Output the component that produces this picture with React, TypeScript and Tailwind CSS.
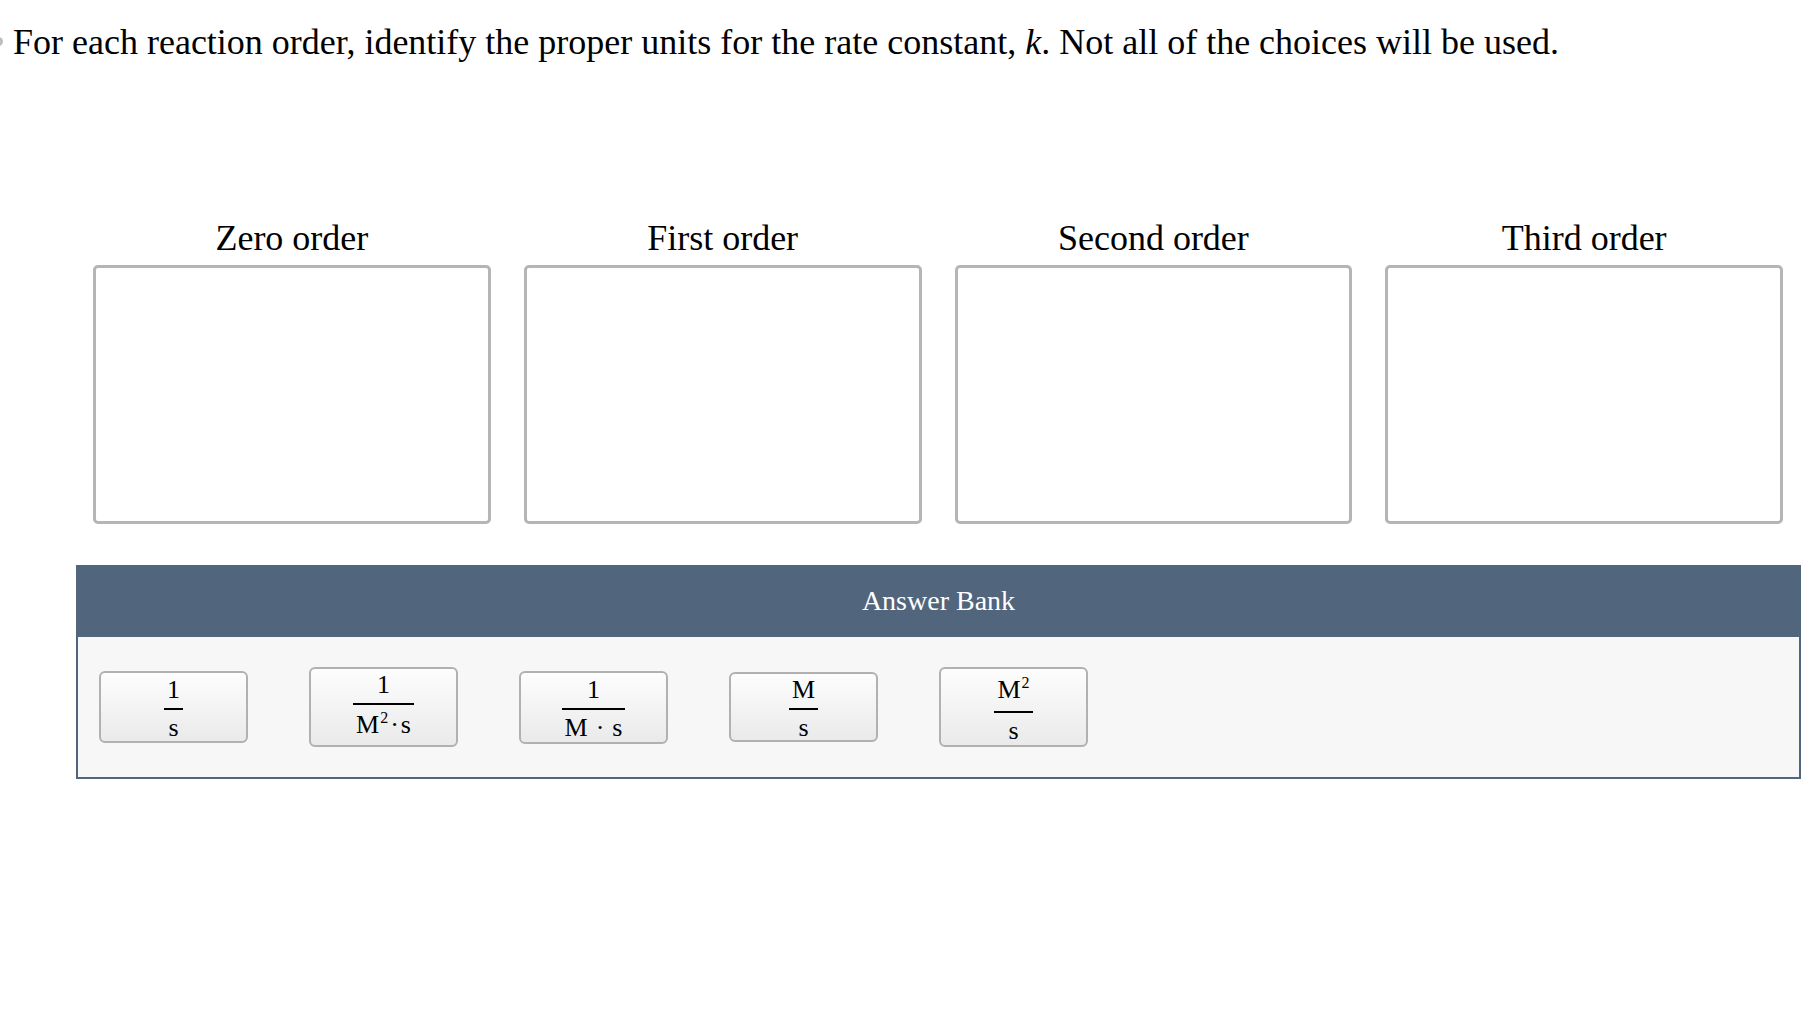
import React from "react";

const orders = ["Zero order", "First order", "Second order", "Third order"];

function Sup({ children }: { children: React.ReactNode }) {
  return <span className="relative -top-[10px] ml-[1px] text-[16px]">{children}</span>;
}

function Tile({
  children,
  className = "pt-[5px] pb-[1px]",
}: {
  children: React.ReactNode;
  className?: string;
}) {
  return (
    <div
      className={`flex w-[149px] shrink-0 justify-center rounded-[6px] border-2 border-[#b1b1b1] bg-linear-to-b from-[#fdfdfd] to-[#eaeaea] ${className}`}
    >
      {children}
    </div>
  );
}

function Frac({
  num,
  den,
  numClass = "",
  denClass = "",
}: {
  num: React.ReactNode;
  den: React.ReactNode;
  numClass?: string;
  denClass?: string;
}) {
  return (
    <div className="inline-flex flex-col items-stretch text-[26px] text-black">
      <div className={`px-[3px] text-center leading-[24px] ${numClass}`}>{num}</div>
      <div className="mt-[6px] h-[2px] bg-black" />
      <div className={`mt-[6px] px-[3px] text-center leading-[24px] ${denClass}`}>{den}</div>
    </div>
  );
}

export default function App() {
  return (
    <div className="min-h-screen bg-white font-['Liberation_Serif','Times_New_Roman',serif] text-black">
      {/* prompt */}
      <div className="flex items-start pt-[23px]">
        <span className="mt-[14px] -ml-[6px] h-[9px] w-[9px] shrink-0 rounded-full bg-[#bdbdbd]" />
        <p className="pl-[10px] text-[36px] leading-[38px]">
          For each reaction order, identify the proper units for the rate constant, <i>k</i>. Not all
          of the choices will be used.
        </p>
      </div>

      {/* drop targets */}
      <div className="mt-[157px] ml-[93px] mr-[33px] grid grid-cols-4 gap-[33px]">
        {orders.map((o) => (
          <div key={o} className="flex flex-col">
            <div className="mb-[7px] text-center text-[36px] leading-[40px]">{o}</div>
            <div className="h-[259px] rounded-[5px] border-[3px] border-[#b5b5b5] bg-white" />
          </div>
        ))}
      </div>

      {/* answer bank */}
      <div className="mt-[41px] ml-[76px] mr-[15px]">
        <div className="flex h-[72px] items-center justify-center bg-[#51657d] text-[28px] text-white">
          Answer Bank
        </div>
        <div className="flex items-center gap-[61px] border-2 border-t-0 border-[#51657d] bg-[#f7f7f7] px-[21px] py-[30px]">
          <Tile>
            <Frac num="1" den="s" />
          </Tile>
          <Tile className="pt-[4px] pb-[5px]">
            <Frac
              num="1"
              denClass="pt-[2px]"
              den={
                <>
                  M<Sup>2</Sup>
                  <span className="ml-[2px] mr-[2px]">·</span>s
                </>
              }
            />
          </Tile>
          <Tile className="pt-[5px] pb-[2px]">
            <Frac
              num="1"
              den={
                <>
                  M<span className="px-[8px]">·</span>s
                </>
              }
            />
          </Tile>
          <Tile className="pt-[4px] pb-0">
            <Frac num="M" den="s" />
          </Tile>
          <Tile className="pt-[2px] pb-[2px]">
            <Frac
              numClass="pt-[7px]"
              num={
                <>
                  M<Sup>2</Sup>
                </>
              }
              den="s"
            />
          </Tile>
        </div>
      </div>
    </div>
  );
}
